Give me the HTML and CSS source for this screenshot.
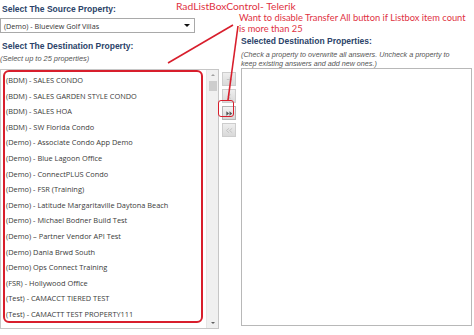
FILE: index.html
```html
<!DOCTYPE html>
<html>
<head>
<meta charset="utf-8">
<link rel="stylesheet" href="styles.css">
</head>
<body>
<div class="page">
  <div class="left">
    <div class="heading h-source">Select The Source Property:</div>
    <div class="select">
      <span class="select-text">(Demo) - Blueview Golf Villas</span>
      <span class="select-arrow"></span>
    </div>
    <div class="heading h-dest">Select The Destination Property:</div>
    <div class="note note-left">(Select up to 25 properties)</div>
    <div class="list-row">
      <div class="listbox">
        <div class="items">
          <div class="item">(BDM) - SALES CONDO</div>
          <div class="item">(BDM) - SALES GARDEN STYLE CONDO</div>
          <div class="item">(BDM) - SALES HOA</div>
          <div class="item">(BDM) - SW Florida Condo</div>
          <div class="item">(Demo) - Associate Condo App Demo</div>
          <div class="item">(Demo) - Blue Lagoon Office</div>
          <div class="item">(Demo) - ConnectPLUS Condo</div>
          <div class="item">(Demo) - FSR (Training)</div>
          <div class="item">(Demo) - Latitude Margaritaville Daytona Beach</div>
          <div class="item">(Demo) - Michael Bodner Build Test</div>
          <div class="item">(Demo) – Partner Vendor API Test</div>
          <div class="item">(Demo) Dania Brwd South</div>
          <div class="item">(Demo) Ops Connect Training</div>
          <div class="item">(FSR) - Hollywood Office</div>
          <div class="item">(Test) - CAMACCT TIERED TEST</div>
          <div class="item">(Test) - CAMACTT TEST PROPERTY111</div>
          <div class="item">(Test) - CAMACTT DEMO TEST</div>
        </div>
        <div class="scrollbar">
          <div class="sb-up"></div>
          <div class="sb-thumb"></div>
          <div class="sb-track"></div>
          <div class="sb-down"></div>
        </div>
      </div>
      <div class="buttons">
        <div class="btn disabled"><svg viewBox="0 0 10 10" width="9" height="9"><path d="M2 5h5M5 3l2 2-2 2" fill="none" stroke="#c4c4c4" stroke-width="1.2"/></svg></div>
        <div class="btn disabled"><svg viewBox="0 0 10 10" width="9" height="9"><path d="M6 2.5L3.5 5 6 7.5" fill="none" stroke="#c4c4c4" stroke-width="1.2"/></svg></div>
        <div class="btn active"><svg viewBox="0 0 10 10" width="9" height="9"><path d="M1.5 2.5L4.5 5 1.5 7.5z M5 2.5L8 5 5 7.5z" fill="#555"/></svg></div>
        <div class="btn disabled"><svg viewBox="0 0 10 10" width="9" height="9"><path d="M4.5 2.5L1.5 5 4.5 7.5M8 2.5L5 5 8 7.5" fill="none" stroke="#c4c4c4" stroke-width="1.1"/></svg></div>
      </div>
    </div>
  </div>
  <div class="right">
    <div class="heading h-selected">Selected Destination Properties:</div>
    <div class="note note-right">(Check a property to overwrite all answers. Uncheck a property to<br>keep existing answers and add new ones.)</div>
    <div class="listbox-right"></div>
  </div>

  <div class="annot annot-title">RadListBoxControl- Telerik</div>
  <div class="annot annot-want">Want to disable Transfer All button if Listbox item count<br>is more than 25</div>
  <div class="list-highlight"></div>
  <div class="btn-highlight"></div>
  <svg class="lines" width="474" height="335" viewBox="0 0 474 335">
    <line x1="168" y1="63" x2="233" y2="25" stroke="#d81e2c" stroke-width="1.6"/>
    <line x1="238" y1="26" x2="228" y2="100" stroke="#d81e2c" stroke-width="1.6"/>
  </svg>
</div>
</body>
</html>
```
FILE: styles.css
```css
html, body {
  margin: 0;
  padding: 0;
  background: #ffffff;
}
.page {
  position: relative;
  width: 474px;
  height: 335px;
  overflow: hidden;
  display: flex;
  font-family: "Liberation Sans", Arial, sans-serif;
}
.left {
  width: 241px;
  display: flex;
  flex-direction: column;
}
.heading {
  font-weight: bold;
  font-size: 8.5px;
  color: #2b4369;
  line-height: 10px;
}
.h-source {
  margin: 4px 0 0 2px;
}
.select {
  margin-top: 4px;
  width: 193px;
  height: 13px;
  border: 1px solid #a9a9a9;
  display: flex;
  align-items: center;
  justify-content: space-between;
  box-sizing: content-box;
  background: #fff;
}
.select-text {
  font-family: "Open Sans", sans-serif;
  font-size: 7.2px;
  color: #333;
  padding-left: 3px;
}
.select-arrow {
  width: 0;
  height: 0;
  border-left: 3px solid transparent;
  border-right: 3px solid transparent;
  border-top: 3px solid #111;
  margin-right: 4px;
}
.h-dest {
  margin: 8px 0 0 2px;
}
.note {
  font-style: italic;
  color: #555;
  font-size: 7.4px;
}
.note-left {
  margin-top: 3px;
  line-height: 9px;
}
.list-row {
  margin-top: 6px;
  display: flex;
  align-items: flex-start;
}
.listbox {
  width: 217px;
  height: 258px;
  border: 1px solid #c6c6c6;
  display: flex;
  background: #fff;
  overflow: hidden;
}
.items {
  flex: 1;
  padding-top: 3px;
  overflow: hidden;
}
.item {
  font-family: "Open Sans", sans-serif;
  font-size: 7.4px;
  color: #3a3a3a;
  height: 15.6px;
  line-height: 15.6px;
  padding-left: 5px;
  white-space: nowrap;
}
.scrollbar {
  width: 11px;
  background: #f0f0f0;
  border-left: 1px solid #e6e6e6;
  display: flex;
  flex-direction: column;
  align-items: center;
}
.sb-up, .sb-down {
  width: 0;
  height: 0;
  border-left: 2.5px solid transparent;
  border-right: 2.5px solid transparent;
  margin: 4px 0;
}
.sb-up {
  border-bottom: 2.5px solid #a0a0a0;
}
.sb-down {
  border-top: 2.5px solid #606060;
}
.sb-thumb {
  width: 8px;
  height: 10px;
  margin-top: 1px;
  background: #cdcdcd;
}
.sb-track {
  flex: 1;
}
.buttons {
  margin-left: 3px;
  margin-top: 3px;
  display: flex;
  flex-direction: column;
  gap: 3px;
}
.btn {
  width: 12px;
  height: 12px;
  border: 1px solid #cdcdcd;
  background: linear-gradient(#eeeeee, #d9d9d9);
  display: flex;
  align-items: center;
  justify-content: center;
}
.btn.active {
  border-color: #b5b5b5;
  background: linear-gradient(#f4f4f4, #d6d6d6);
}
.right {
  width: 233px;
  display: flex;
  flex-direction: column;
}
.h-selected {
  margin-top: 36px;
}
.note-right {
  margin-top: 5px;
  font-size: 7.2px;
  line-height: 8.5px;
  width: 233px;
  white-space: nowrap;
}
.listbox-right {
  margin-top: 0;
  width: 229px;
  height: 256px;
  border: 1px solid #b8b8b8;
  background: #fff;
}
.annot {
  position: absolute;
  font-family: "Lato", "Open Sans", sans-serif;
  color: #e0323f;
  font-size: 9.3px;
  line-height: 10.5px;
  white-space: nowrap;
}
.annot-title {
  left: 176px;
  top: 1px;
  font-size: 10.3px;
}
.annot-want {
  left: 239px;
  top: 13px;
}
.list-highlight {
  position: absolute;
  left: 3px;
  top: 70px;
  width: 196px;
  height: 249px;
  border: 2px solid #d81e2c;
  border-radius: 6px;
}
.btn-highlight {
  position: absolute;
  left: 218px;
  top: 100px;
  width: 14px;
  height: 15px;
  border: 1.5px solid #d81e2c;
  border-radius: 3px;
}
.lines {
  position: absolute;
  left: 0;
  top: 0;
}
```
